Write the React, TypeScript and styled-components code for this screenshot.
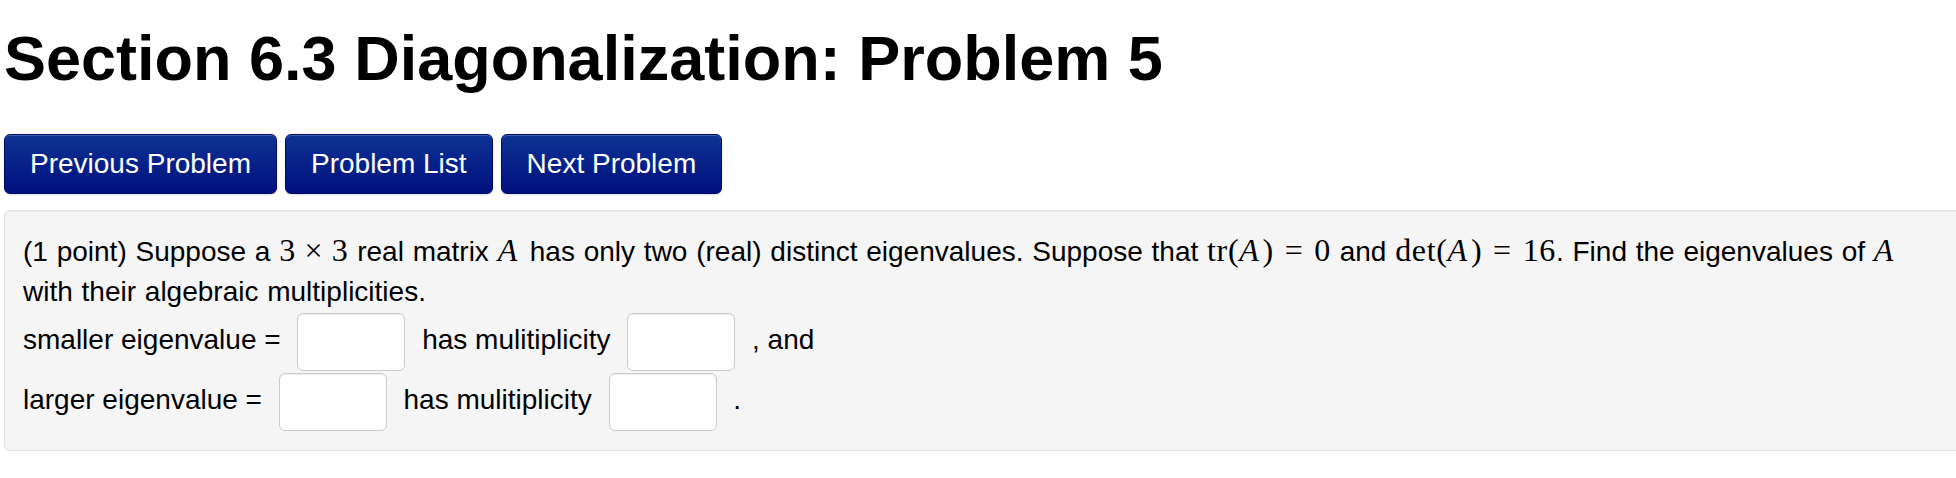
import React from 'react'
import styled, { createGlobalStyle } from 'styled-components'

const GlobalStyle = createGlobalStyle`
  html, body {
    margin: 0;
    padding: 0;
    background: #fff;
    overflow: hidden;
  }
  body {
    font-family: "Liberation Sans", Arial, Helvetica, sans-serif;
    color: #000;
  }
`

const Page = styled.div`
  padding: 22px 0 0 4px;
`

const Title = styled.h1`
  margin: 0;
  font-size: 63px;
  line-height: 72px;
  font-weight: 700;
`

const Nav = styled.div`
  display: flex;
  gap: 8px;
  margin-top: 40px;
`

const NavButton = styled.button`
  height: 60px;
  padding: 0 25px;
  border: 1px solid #000b68;
  border-radius: 6px;
  background: linear-gradient(to bottom, #0d3393, #00107f);
  box-shadow: inset 0 1px 0 rgba(255, 255, 255, 0.22), 0 1px 2px rgba(0, 0, 0, 0.15);
  color: #fff;
  font-family: "Liberation Sans", Arial, sans-serif;
  font-size: 28px;
  line-height: 58px;
  cursor: pointer;
`

// the well runs past the right edge of the window, as in the screenshot
const ProblemWell = styled.div`
  margin-top: 16px;
  margin-right: -4px;
  padding: 19px 45px 18px 18px;
  background: #f5f5f5;
  border: 1px solid #e3e3e3;
  border-right: none;
  border-radius: 6px 0 0 6px;
  box-shadow: inset 0 1px 1px rgba(0, 0, 0, 0.05);
  font-size: 28px;
`

const Statement = styled.p`
  margin: 0;
  line-height: 40px;
  word-spacing: 1px;
`

const Answers = styled.div``

const AnswerRow = styled.div`
  line-height: 34px;
`

const Blank = styled.input`
  box-sizing: border-box;
  width: 108px;
  height: 58px;
  margin: 1px 9px;
  padding: 0 8px;
  vertical-align: middle;
  background: #fff;
  border: 1px solid #cbcbcb;
  border-radius: 6px;
  box-shadow: inset 0 1px 1px rgba(0, 0, 0, 0.075);
  font-size: 28px;
`

const MathSpan = styled.span`
  font-family: "Liberation Serif", "DejaVu Serif", serif;
  font-size: 32px;
  letter-spacing: 0.02em;
  word-spacing: 0;
  white-space: nowrap;
`

const Mi = styled.span`
  font-style: italic;
  margin-right: 0.1em;
`

const Mo = styled.span<{ $space: number }>`
  margin: 0 ${p => p.$space}em;
`

const A = () => (
  <MathSpan>
    <Mi>A</Mi>
  </MathSpan>
)

const App: React.FC = () => {
  return (
    <Page>
      <GlobalStyle />
      <Title>Section 6.3 Diagonalization: Problem 5</Title>
      <Nav>
        <NavButton>Previous Problem</NavButton>
        <NavButton>Problem List</NavButton>
        <NavButton>Next Problem</NavButton>
      </Nav>
      <ProblemWell>
        <Statement>
          (1 point) Suppose a{' '}
          <MathSpan>
            3<Mo $space={0.27}>×</Mo>3
          </MathSpan>{' '}
          real matrix <A /> has only two (real) distinct eigenvalues. Suppose that{' '}
          <MathSpan>
            tr(<Mi>A</Mi>)<Mo $space={0.34}>=</Mo>0
          </MathSpan>{' '}
          and{' '}
          <MathSpan>
            det(<Mi>A</Mi>)<Mo $space={0.34}>=</Mo>16
          </MathSpan>
          . Find the eigenvalues of <A /> with their algebraic multiplicities.
        </Statement>
        <Answers>
          <AnswerRow>
            smaller eigenvalue = <Blank /> has mulitiplicity <Blank /> , and
          </AnswerRow>
          <AnswerRow>
            larger eigenvalue = <Blank /> has mulitiplicity <Blank /> .
          </AnswerRow>
        </Answers>
      </ProblemWell>
    </Page>
  )
}

export default App
